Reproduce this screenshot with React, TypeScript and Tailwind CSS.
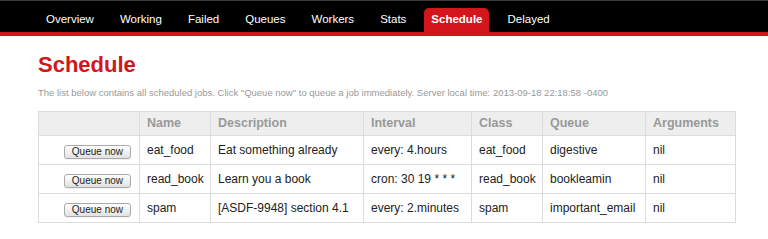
import React from "react";

const tabs = ["Overview", "Working", "Failed", "Queues", "Workers", "Stats", "Schedule", "Delayed"];

const rows = [
  ["eat_food", "Eat something already", "every: 4.hours", "eat_food", "digestive", "nil"],
  ["read_book", "Learn you a book", "cron: 30 19 * * *", "read_book", "bookleamin", "nil"],
  ["spam", "[ASDF-9948] section 4.1", "every: 2.minutes", "spam", "important_email", "nil"],
];

const widths = ["w-[101px]", "w-[71px]", "w-[153px]", "w-[108px]", "w-[71px]", "w-[103px]", "w-[90px]"];

export default function App() {
  return (
    <div className="w-[768px] h-[239px] bg-white overflow-hidden" style={{ fontFamily: '"Liberation Sans", Arial, Helvetica, sans-serif' }}>
      <div className="bg-black border-t border-[#3c3c3c] h-[32px] flex items-end pl-[38px] gap-[10px]">
        {tabs.map((t) =>
          t === "Schedule" ? (
            <div key={t} className="h-[24px] px-[7px] flex items-center bg-[#d2161b] rounded-t-[5px] text-white font-bold text-[11.5px]">
              {t}
            </div>
          ) : (
            <div key={t} className="h-[24px] px-[8px] flex items-center text-white text-[11.5px]">
              {t}
            </div>
          )
        )}
      </div>
      <div className="h-[4px] bg-[#d2161b]" />
      <div className="pl-[38px]">
        <h1 className="text-[22px] font-bold text-[#d2161b] leading-none mt-[18px]">Schedule</h1>
        <p className="text-[9.5px] text-[#999] leading-none mt-[12px]">
          The list below contains all scheduled jobs. Click "Queue now" to queue a job immediately. Server local time: 2013-09-18 22:18:58 -0400
        </p>
        <table className="mt-[13px] w-[697px] border-collapse border border-[#dcdcdc] table-fixed">
          <thead>
            <tr className="bg-[#eeeeee] h-[24px]">
              {["", "Name", "Description", "Interval", "Class", "Queue", "Arguments"].map((h, i) => (
                <th key={i} className={`${widths[i]} border border-[#dcdcdc] text-left px-[7px] text-[12.5px] font-bold text-[#999] leading-none`}>
                  {h}
                </th>
              ))}
            </tr>
          </thead>
          <tbody>
            {rows.map((r, ri) => (
              <tr key={ri} className="h-[29px]">
                <td className="border border-[#dcdcdc] text-right pr-[8px]">
                  <button className="h-[14px] px-[7px] text-[10px] leading-none text-[#222] rounded-[3px] border border-[#aaa] bg-gradient-to-b from-white to-[#e2e2e2] shadow-[0_1px_0_rgba(0,0,0,0.05)]">
                    Queue now
                  </button>
                </td>
                {r.map((c, ci) => (
                  <td key={ci} className="border border-[#dcdcdc] px-[7px] text-[12px] text-[#222] leading-none whitespace-nowrap">
                    {c}
                  </td>
                ))}
              </tr>
            ))}
          </tbody>
        </table>
      </div>
    </div>
  );
}
